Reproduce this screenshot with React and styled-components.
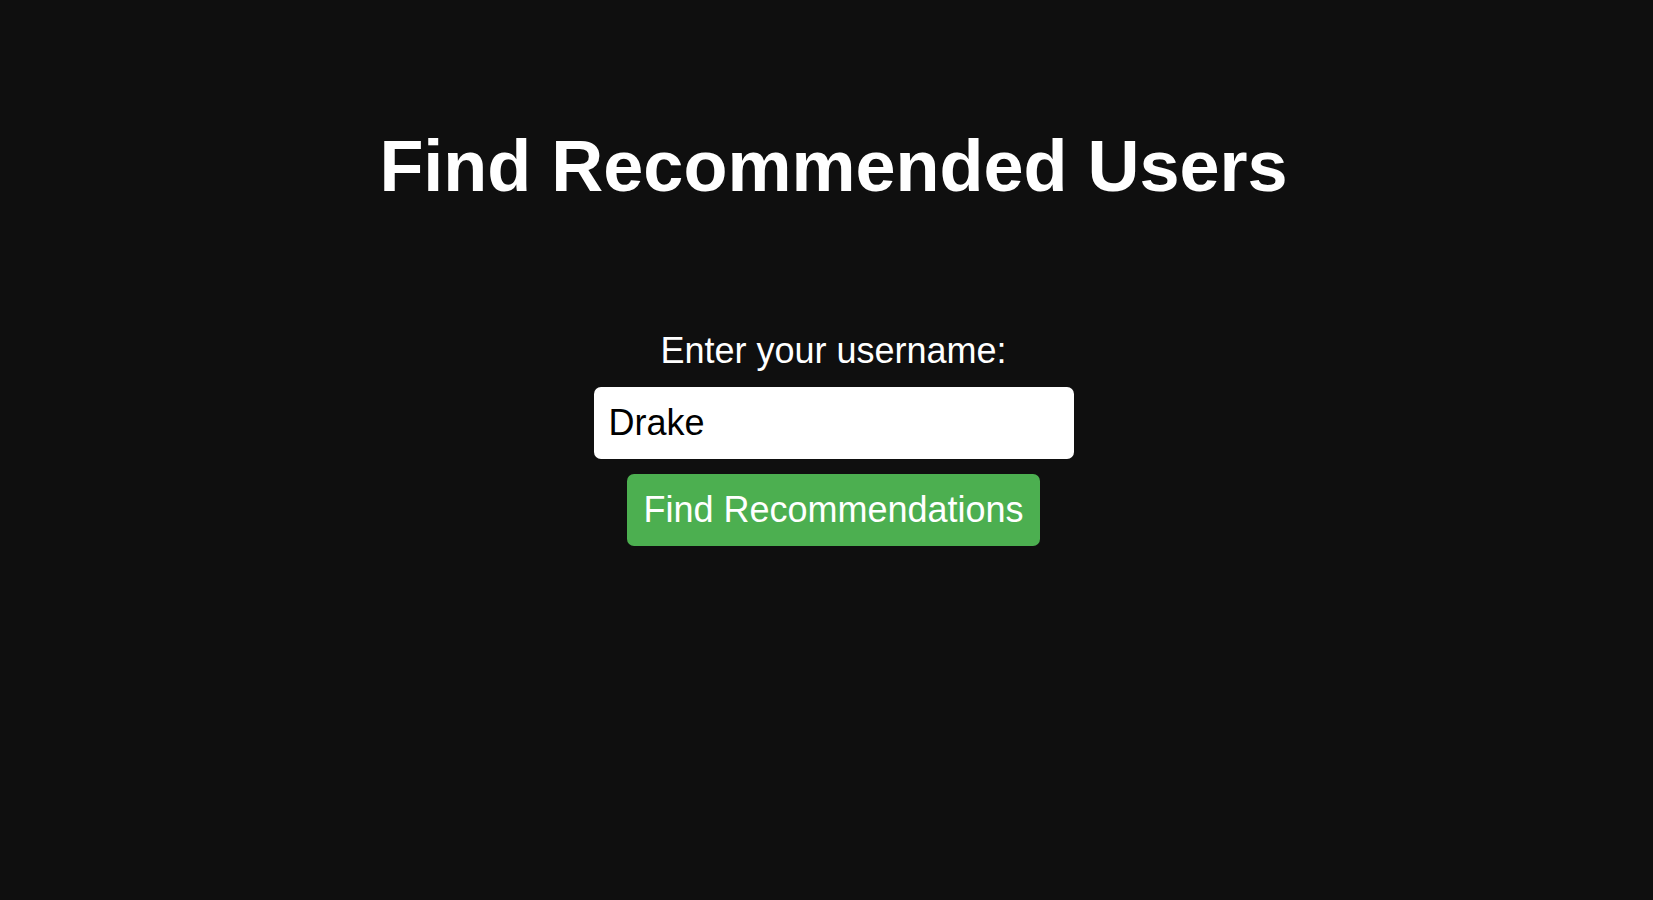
import React, { useState } from "react";
import styled, { createGlobalStyle } from "styled-components";

const GlobalStyle = createGlobalStyle`
  html, body {
    margin: 0;
    padding: 0;
    background: #0f0f0f;
  }
  body {
    font-family: "Liberation Sans", Arial, sans-serif;
  }
`;

const Page = styled.main`
  min-height: 100vh;
  box-sizing: border-box;
  padding: 125px 0 0 14px;
  background: #0f0f0f;
  color: #ffffff;
  display: flex;
  flex-direction: column;
  align-items: center;
  font-family: "Liberation Sans", Arial, sans-serif;
`;

const Title = styled.h1`
  margin: 0 0 123px;
  font-size: 72px;
  font-weight: 700;
  line-height: normal;
  color: #ffffff;
  text-align: center;
`;

const Form = styled.form`
  display: flex;
  flex-direction: column;
  align-items: center;
`;

const Label = styled.label`
  display: block;
  font-size: 36px;
  line-height: normal;
  color: #ffffff;
  margin-bottom: 15px;
`;

const Input = styled.input`
  box-sizing: border-box;
  width: 480px;
  height: 72px;
  padding: 0 15px;
  border: none;
  border-radius: 7px;
  background: #ffffff;
  color: #000000;
  font-family: "Liberation Sans", Arial, sans-serif;
  font-size: 36px;
  outline: none;
  margin: 0 0 15px;
`;

const Button = styled.button`
  box-sizing: border-box;
  height: 72px;
  padding: 0 16px;
  border: none;
  border-radius: 7px;
  background: #4caf50;
  color: #ffffff;
  font-family: "Liberation Sans", Arial, sans-serif;
  font-size: 36px;
  cursor: pointer;
`;

export default function App() {
  const [name, setName] = useState("Drake");
  return (
    <>
      <GlobalStyle />
      <Page>
        <Title>Find Recommended Users</Title>
        <Form onSubmit={(e) => e.preventDefault()}>
          <Label htmlFor="username">Enter your username:</Label>
          <Input
            id="username"
            type="text"
            value={name}
            onChange={(e) => setName(e.target.value)}
          />
          <Button type="submit">Find Recommendations</Button>
        </Form>
      </Page>
    </>
  );
}
